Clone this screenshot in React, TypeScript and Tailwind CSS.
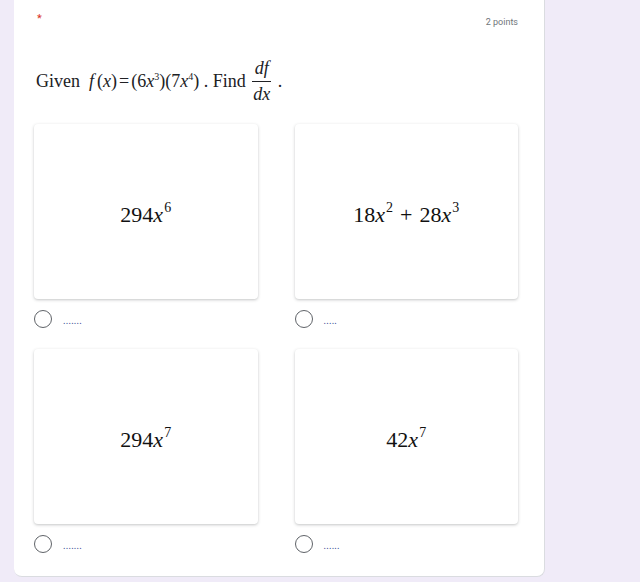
import type { ReactNode } from "react";

const serif = { fontFamily: '"Liberation Serif", "Times New Roman", serif' };

function Radio() {
    return (
        <span className="block w-[18px] h-[18px] rounded-full border-[1.5px] border-[#5f6368] shrink-0" />
    );
}

function Option({ children, dots }: { children: ReactNode; dots: string }) {
    return (
        <div className="flex flex-col">
            <div className="h-[175px] bg-white rounded-[4px] shadow-[0_1px_3px_rgba(60,64,67,0.3)] flex items-center justify-center">
                <div className="text-[22px] text-[#111] mt-[6px]" style={serif}>
                    {children}
                </div>
            </div>
            <div className="flex items-center gap-[11px] mt-[10px] h-[20px]">
                <Radio />
                <span className="text-[9px] leading-none text-[#2f3f8f] tracking-[0.3px] mt-[3px]">{dots}</span>
            </div>
        </div>
    );
}

function X() {
    return <i className="italic">x</i>;
}

function Pow({ n }: { n: string }) {
    return <span className="relative -top-[10px] text-[14px] ml-[1px]">{n}</span>;
}

function SmallPow({ n }: { n: string }) {
    return <span className="relative -top-[7px] text-[10px]">{n}</span>;
}

export default function App() {
    return (
        <div className="w-[640px] h-[582px] bg-[#f0ebf8] overflow-hidden">
            <div className="ml-[14px] w-[531px] h-[577px] bg-white rounded-b-[8px] border-r border-b border-[#dadce0] pl-[20px] pr-[26px]">
                <div className="flex justify-between pt-[13px] pl-[3px]">
                    <span
                        className="text-[#d93025] text-[11px] leading-none"
                        style={{ fontFamily: '"Roboto", "Liberation Sans", sans-serif' }}
                    >
                        *
                    </span>
                    <span
                        className="text-[#70757a] text-[9px] mt-[5px] leading-none"
                        style={{ fontFamily: '"Roboto", "Liberation Sans", sans-serif' }}
                    >
                        2 points
                    </span>
                </div>

                <div className="flex items-center mt-[32px] pl-[2px] text-[18px] text-[#202124]" style={serif}>
                    <span>Given&nbsp;&nbsp;</span>
                    <span>
                        <i>f</i>
                        <span className="ml-[3px]">(</span>
                        <i>x</i>)<span className="mx-[2px]">=</span>(6<i>x</i>
                        <SmallPow n="3" />
                        )(7<i>x</i>
                        <SmallPow n="4" />)
                    </span>
                    <span>&nbsp;. Find&nbsp;</span>
                    <span className="inline-flex flex-col items-center mx-[2px] leading-none">
                        <span className="italic pb-[4px] px-[1px]">df</span>
                        <span className="block w-full h-px bg-[#202124]" />
                        <span className="italic pt-[3px] px-[1px]">dx</span>
                    </span>
                    <span>&nbsp;.</span>
                </div>

                <div className="grid grid-cols-2 gap-x-[37px] gap-y-[20px] mt-[21px]">
                    <Option dots=".......">
                        294<X />
                        <Pow n="6" />
                    </Option>
                    <Option dots=".....">
                        18<X />
                        <Pow n="2" />
                        <span className="mx-[7px]">+</span>
                        28<X />
                        <Pow n="3" />
                    </Option>
                    <Option dots=".......">
                        294<X />
                        <Pow n="7" />
                    </Option>
                    <Option dots="......">
                        42<X />
                        <Pow n="7" />
                    </Option>
                </div>
            </div>
        </div>
    );
}
